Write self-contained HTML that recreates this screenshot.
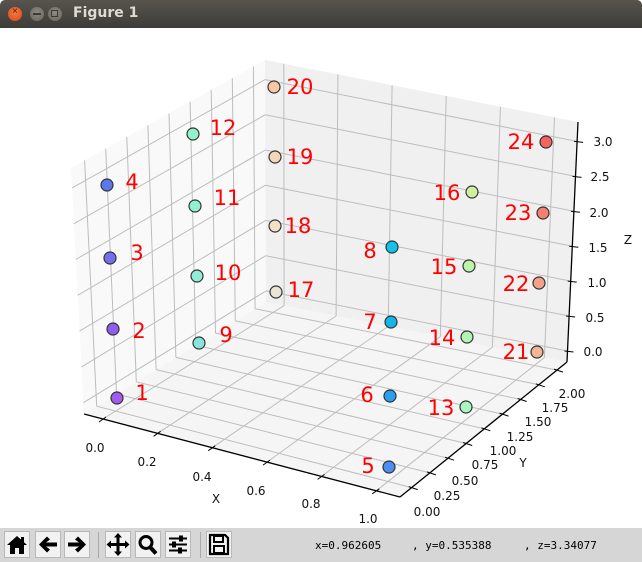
<!DOCTYPE html>
<html><head><meta charset="utf-8"><style>
html,body{margin:0;padding:0;width:642px;height:562px;overflow:hidden;background:#fff;font-family:"DejaVu Sans","Liberation Sans",sans-serif}
#title{position:absolute;left:0;top:0;width:642px;height:28px;background:linear-gradient(#57544d,#3d3c38);border-radius:5px 5px 0 0}
.wb{position:absolute;top:7px;width:14px;height:14px;border-radius:50%;}
#tt{position:absolute;left:73px;top:5px;color:#dfdbd2;font:bold 14px "DejaVu Sans","Liberation Sans",sans-serif}
#tb{position:absolute;left:0;top:528px;width:642px;height:34px;background:#d6d6d6}
.btn{position:absolute;top:3px;width:26px;height:27px;background:#f2f2f2;border:1px solid #b8b8b8;box-sizing:border-box}
.sep{position:absolute;top:4px;width:1px;height:26px;background:#aaa}
#coord{position:absolute;top:11px;font:11px "DejaVu Sans Mono","Liberation Mono",monospace;color:#000;white-space:pre}
svg text{font-family:"DejaVu Sans","Liberation Sans",sans-serif}
</style></head><body>
<div id="title">
<div class="wb" style="left:8px;background:radial-gradient(circle at 50% 40%,#f37a4a,#d9480f)"></div>
<div class="wb" style="left:30px;background:radial-gradient(circle at 50% 40%,#8d8a83,#66635d)"></div>
<div class="wb" style="left:48px;background:radial-gradient(circle at 50% 40%,#8d8a83,#66635d)"></div>
<span style="position:absolute;left:12px;top:6px;font:10px sans-serif;color:#5a1a00">×</span>
<div style="position:absolute;left:33px;top:13px;width:8px;height:2px;background:#3c3b37"></div>
<div style="position:absolute;left:51px;top:10px;width:7px;height:7px;border:1px solid #3c3b37;box-sizing:border-box"></div>
<div id="tt">Figure 1</div>
</div>
<svg id="s" width="642" height="528" style="position:absolute;left:0;top:0" xmlns="http://www.w3.org/2000/svg"></svg>
<div id="tb">
<div class="btn" style="left:4px"><svg width="24" height="25"><path d="M12 4 L2 13 H5 V22 H10 V16 H14 V22 H19 V13 H22 Z" fill="#000"/><rect x="16" y="5" width="3" height="5" fill="#000"/></svg></div>
<div class="btn" style="left:35px"><svg width="24" height="25"><path d="M3 12.5 L11 4.5 L14 7.5 L10 10.5 H21 V14.5 H10 L14 17.5 L11 20.5 Z" fill="#000"/></svg></div>
<div class="btn" style="left:64px"><svg width="24" height="25"><path d="M21 12.5 L13 4.5 L10 7.5 L14 10.5 H3 V14.5 H14 L10 17.5 L13 20.5 Z" fill="#000"/></svg></div>
<div class="sep" style="left:98px"></div>
<div class="btn" style="left:105px"><svg width="24" height="25"><path d="M12 1 L16 5.5 H13.5 V11 H19 V8.5 L23.5 12.5 L19 16.5 V14 H13.5 V19.5 H16 L12 24 L8 19.5 H10.5 V14 H5 V16.5 L0.5 12.5 L5 8.5 V11 H10.5 V5.5 H8 Z" fill="#000"/></svg></div>
<div class="btn" style="left:135px"><svg width="24" height="25"><circle cx="10" cy="10.5" r="6" fill="none" stroke="#000" stroke-width="3"/><path d="M14 15 L20 21.5" stroke="#000" stroke-width="4"/></svg></div>
<div class="btn" style="left:165px"><svg width="24" height="25"><g stroke="#000" stroke-width="2"><path d="M3 6.5H21M3 12.5H21M3 18.5H21"/></g><rect x="13" y="3.5" width="4" height="6" fill="#000"/><rect x="6" y="9.5" width="4" height="6" fill="#000"/><rect x="12" y="15.5" width="4" height="6" fill="#000"/></svg></div>
<div class="sep" style="left:200px"></div>
<div class="btn" style="left:206px"><svg width="24" height="25"><path d="M3 3 H18 L21 6 V22 H3 Z" fill="none" stroke="#000" stroke-width="2.2"/><rect x="7" y="4" width="9" height="6" fill="none" stroke="#000" stroke-width="2"/><rect x="7" y="14" width="10" height="7" fill="none" stroke="#000" stroke-width="2"/></svg></div>
<div id="coord" style="left:315px">x=0.962605</div>
<div id="coord" style="left:412px">, y=0.535388</div>
<div id="coord" style="left:524px">, z=3.34077</div>
</div>
<script>
var s=document.getElementById('s'),h='';
function P(a,b,t){return [a[0]+(b[0]-a[0])*t,a[1]+(b[1]-a[1])*t];}
function bil(p00,p10,p01,p11,u,v){return P(P(p00,p10,u),P(p01,p11,u),v);}
function ln(a,b,c,w){h+='<line x1="'+a[0].toFixed(1)+'" y1="'+a[1].toFixed(1)+'" x2="'+b[0].toFixed(1)+'" y2="'+b[1].toFixed(1)+'" stroke="'+c+'" stroke-width="'+w+'"/>';}
function poly(pts,f){h+='<polygon points="'+pts.map(function(p){return p.join(',')}).join(' ')+'" fill="'+f+'"/>';}
var L=[84,414],F=[400,497],R=[567,362],B=[266,302],LT=[71,168],BT=[265,60],RT=[578,122];
function fx(x){return 0.06+x*0.865;}function fy(y){return 0.07+y/2*0.87;}function fz(z){return 0.046+z/3*0.873;}
poly([L,F,R,B],'#f5f5f5');poly([L,B,BT,LT],'#f9f9f9');poly([B,R,RT,BT],'#f0f0f0');
var g='#bdbdbd',i,a,b;
for(i=0;i<=5;i++){a=bil(L,F,B,R,fx(i*0.2),0);b=bil(L,F,B,R,fx(i*0.2),1);ln(a,b,g,1);}
for(i=0;i<=8;i++){a=bil(L,F,B,R,0,fy(i*0.25));b=bil(L,F,B,R,1,fy(i*0.25));ln(a,b,g,1);}
for(i=0;i<=8;i++){a=bil(L,B,LT,BT,fy(i*0.25),0);b=bil(L,B,LT,BT,fy(i*0.25),1);ln(a,b,g,1);}
for(i=0;i<=6;i++){a=bil(L,B,LT,BT,0,fz(i*0.5));b=bil(L,B,LT,BT,1,fz(i*0.5));ln(a,b,g,1);}
for(i=0;i<=5;i++){a=bil(B,R,BT,RT,fx(i*0.2),0);b=bil(B,R,BT,RT,fx(i*0.2),1);ln(a,b,g,1);}
for(i=0;i<=6;i++){a=bil(B,R,BT,RT,0,fz(i*0.5));b=bil(B,R,BT,RT,1,fz(i*0.5));ln(a,b,g,1);}
ln(L,F,'#000',1.3);ln(F,R,'#000',1.3);ln(R,RT,'#000',1.3);
for(i=0;i<=5;i++){a=P(L,F,fx(i*0.2));ln([a[0]+3,a[1]-2],[a[0]-4,a[1]+3],'#000',1);}
for(i=0;i<=8;i++){a=P(F,R,fy(i*0.25));ln([a[0]-3,a[1]-1],[a[0]+6,a[1]+2],'#000',1);}
for(i=0;i<=6;i++){a=P(R,RT,fz(i*0.5));ln([a[0]-3,a[1]],[a[0]+6,a[1]+1],'#000',1);}
function tx(x,y,t,sz,c){h+='<text x="'+x+'" y="'+y+'" font-size="'+sz+'" fill="'+c+'" text-anchor="middle" dominant-baseline="central">'+t+'</text>';}
[['0.0',95,448],['0.2',147,462],['0.4',202,477],['0.6',256,491],['0.8',311,504],['1.0',368,519],['X',216,499]].forEach(function(q){tx(q[1],q[2],q[0],12,'#111');});
[['0.00',427,512],['0.25',447,496],['0.50',465,481],['0.75',485,465],['1.00',503,451],['1.25',520,437],['1.50',538,422],['1.75',555,408],['2.00',572,394],['Y',523,463]].forEach(function(q){tx(q[1],q[2],q[0],12,'#111');});
[['3.0',603,142],['2.5',600,177],['2.0',599,213],['1.5',598,248],['1.0',597,283],['0.5',595,318],['0.0',593,352],['Z',628,240]].forEach(function(q){tx(q[1],q[2],q[0],12,'#111');});
var pts=[
[1,117,398,'#a25cf0',142,393],[2,113,329,'#8e5df2',139,331],[3,110,258,'#7270f0',137,253],[4,107,185,'#5c78ee',132,182],
[5,389,467,'#4d8ef0',368,466],[6,390,396,'#28a0ef',367,395],[7,391,322,'#12b6e8',370,322],[8,392,247,'#12c2ea',370,251],
[9,199,343,'#88e4dc',226,335],[10,197,276,'#8eeed8',228,273],[11,195,206,'#90f2d2',227,198],[12,193,134,'#92f2cc',223,128],
[13,466,407,'#aaf5c2',441,408],[14,467,337,'#b0f5b2',442,338],[15,469,266,'#bef4a8',444,267],[16,472,192,'#cdf0a0',447,193],
[17,276,292,'#e8e6d2',301,290],[18,275,226,'#f1e1c2',298,226],[19,275,157,'#f6d6b8',300,157],[20,274,87,'#f8c8a6',300,87],
[21,537,352,'#f5b494',516,352],[22,539,283,'#f6a08a',516,284],[23,543,213,'#f68070',518,213],[24,546,142,'#f56460',521,142]];
pts.forEach(function(p){h+='<circle cx="'+p[1]+'" cy="'+p[2]+'" r="6" fill="'+p[3]+'" stroke="#333" stroke-width="1.2"/>';tx(p[4],p[5],p[0],21,'#ff0000');});
s.innerHTML=h;
</script>
</body></html>
